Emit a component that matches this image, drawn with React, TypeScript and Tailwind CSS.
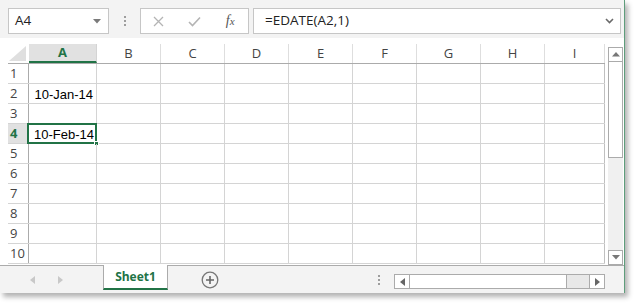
import React from "react";

const cols = [
  { l: "A", w: "w-[68px]" },
  { l: "B", w: "w-[64px]" },
  { l: "C", w: "w-[64px]" },
  { l: "D", w: "w-[64px]" },
  { l: "E", w: "w-[64px]" },
  { l: "F", w: "w-[64px]" },
  { l: "G", w: "w-[64px]" },
  { l: "H", w: "w-[64px]" },
  { l: "I", w: "w-[60px]" },
];

const rows = [1, 2, 3, 4, 5, 6, 7, 8, 9, 10];

function Dots() {
  return (
    <div className="flex flex-col gap-[2px]">
      <div className="w-[2px] h-[2px] bg-[#9d9d9d]" />
      <div className="w-[2px] h-[2px] bg-[#9d9d9d]" />
      <div className="w-[2px] h-[2px] bg-[#9d9d9d]" />
    </div>
  );
}

export default function App() {
  return (
    <div className="w-[636px] h-[303px] bg-white overflow-hidden" style={{ fontFamily: '"Open Sans", "Noto Sans", sans-serif' }}>
      <div className="w-[625px] h-[293px] bg-[#f3f3f3] border-r border-[#5e9d7b] shadow-[3px_4px_5px_rgba(0,0,0,0.3)] flex flex-col">
        {/* toolbar */}
        <div className="h-[38px] flex items-start pt-[8px] pl-[8px] shrink-0">
          <div className="w-[101px] h-[26px] bg-white border border-[#c6c6c6] flex items-center justify-between pl-[6px] pr-[7px]">
            <span className="text-[13.5px] text-[#222] leading-none">A4</span>
            <svg width="8" height="5" viewBox="0 0 8 5"><polygon points="0,0 8,0 4,4.5" fill="#7a7a7a" /></svg>
          </div>
          <div className="w-[31px] h-[26px] flex items-center justify-center">
            <Dots />
          </div>
          <div className="w-[109px] h-[26px] bg-white border border-[#c6c6c6] flex items-center">
            <div className="w-[36px] flex justify-center">
              <svg width="11" height="11" viewBox="0 0 11 11"><path d="M1 1 L10 10 M10 1 L1 10" stroke="#b4b4b4" strokeWidth="1.3" /></svg>
            </div>
            <div className="w-[36px] flex justify-center">
              <svg width="13" height="11" viewBox="0 0 13 11"><path d="M1 6 L4.5 9.5 L12 1.5" stroke="#b4b4b4" strokeWidth="1.6" fill="none" /></svg>
            </div>
            <div className="w-[36px] flex justify-center">
              <span className="italic text-[#555] text-[14px] leading-none" style={{ fontFamily: '"Liberation Serif", serif' }}>
                f<span className="text-[11px]">x</span>
              </span>
            </div>
          </div>
          <div className="ml-[4px] w-[368px] h-[26px] bg-white border border-[#c6c6c6] flex items-center justify-between pl-[11px] pr-[6px]">
            <span className="text-[13.5px] text-[#222] leading-none">=EDATE(A2,1)</span>
            <svg width="9" height="6" viewBox="0 0 9 6"><path d="M1 1 L4.5 4.5 L8 1" stroke="#6a6a6a" strokeWidth="1.6" fill="none" /></svg>
          </div>
        </div>

        {/* sheet area */}
        <div className="h-[227px] bg-white flex pl-[8px] shrink-0">
          <div className="w-[597px] flex flex-col pt-[6px]">
            <div className="h-[20px] flex border-b border-[#ababab]">
              <div className="w-[21px] h-full flex items-end justify-end pr-[3px] pb-[2px]">
                <svg width="17" height="15" viewBox="0 0 17 15"><polygon points="17,0 17,15 0,15" fill="#dfdfdf" /></svg>
              </div>
              {cols.map((c, i) =>
                i === 0 ? (
                  <div key={c.l} className={`${c.w} h-full bg-[#e1e1e1] border-r border-[#d4d4d4] border-b-2 border-b-[#217346] flex items-center justify-center text-[13px] font-bold text-[#217346]`}>
                    {c.l}
                  </div>
                ) : (
                  <div key={c.l} className={`${c.w} h-full border-r border-[#dedede] flex items-center justify-center text-[13px] text-[#444]`}>
                    {c.l}
                  </div>
                )
              )}
            </div>
            {rows.map((r) => (
              <div key={r} className="h-[20px] flex border-b border-[#d4d4d4]">
                {r === 4 ? (
                  <div className="w-[21px] h-full bg-[#e1e1e1] border-r border-[#217346] flex items-center pl-[2px] text-[13px] font-bold text-[#217346]">
                    {r}
                  </div>
                ) : (
                  <div className="w-[21px] h-full border-r border-[#ababab] flex items-center pl-[2px] text-[13px] text-[#444]">
                    {r}
                  </div>
                )}
                {cols.map((c, i) => (
                  <div key={c.l} className={`${c.w} h-full border-r ${i === 8 ? "border-[#c0c0c0]" : "border-[#d4d4d4]"} relative`}>
                    {i === 0 && r === 2 && (
                      <div className="absolute inset-0 flex items-center justify-end pr-[3px] pt-[2px] text-[13px] text-black" style={{ fontFamily: '"Liberation Sans", Arial, sans-serif' }}>
                        10-Jan-14
                      </div>
                    )}
                    {i === 0 && r === 4 && (
                      <>
                        <div className="absolute left-[-2px] top-[-1px] right-[-1px] bottom-[-1px] border-2 border-[#217346] flex items-center justify-end pr-[1px] pt-[2px] text-[13px] text-black" style={{ fontFamily: '"Liberation Sans", Arial, sans-serif' }}>
                          10-Feb-14
                        </div>
                        <div className="absolute right-[-3px] bottom-[-3px] w-[5px] h-[5px] bg-[#217346] border border-white" />
                      </>
                    )}
                  </div>
                ))}
              </div>
            ))}
          </div>
          {/* vertical scrollbar */}
          <div className="ml-[3px] w-[15px] flex flex-col pt-[9px]">
            <div className="h-[15px] border border-[#ababab] bg-white flex items-center justify-center">
              <svg width="8" height="5" viewBox="0 0 8 5"><polygon points="0,4.5 8,4.5 4,0" fill="#777" /></svg>
            </div>
            <div className="h-[96px] border border-t-0 border-[#ababab] bg-white" />
            <div className="flex-1 bg-[#f0f0f0]" />
            <div className="h-[15px] border border-[#ababab] bg-white flex items-center justify-center">
              <svg width="8" height="5" viewBox="0 0 8 5"><polygon points="0,0 8,0 4,4.5" fill="#777" /></svg>
            </div>
          </div>
        </div>

        {/* bottom bar */}
        <div className="h-[28px] border-t border-[#ababab] flex items-start shrink-0">
          <div className="w-[103px] h-[27px] flex items-center">
            <div className="ml-[30px]">
              <svg width="5" height="8" viewBox="0 0 5 8"><polygon points="5,0 5,8 0,4" fill="#c8c8c8" /></svg>
            </div>
            <div className="ml-[23px]">
              <svg width="5" height="8" viewBox="0 0 5 8"><polygon points="0,0 0,8 5,4" fill="#c8c8c8" /></svg>
            </div>
          </div>
          <div className="-mt-px w-[65px] h-[25px] bg-white border-l border-r border-[#ababab] border-b-2 border-b-[#217346] flex items-center justify-center text-[12px] font-bold text-[#217346]">
            Sheet1
          </div>
          <div className="ml-[33px] h-[27px] flex items-center">
            <svg width="18" height="18" viewBox="0 0 18 18">
              <circle cx="9" cy="9" r="7.8" stroke="#777" strokeWidth="1.3" fill="none" />
              <path d="M5 9 H13 M9 5 V13" stroke="#666" strokeWidth="1.6" />
            </svg>
          </div>
          <div className="ml-[159px] h-[27px] flex items-center">
            <Dots />
          </div>
          <div className="ml-[14px] mt-[8px] w-[211px] h-[15px] flex border border-[#ababab] bg-[#e8e8e8]">
            <div className="w-[15px] h-full bg-white border-r border-[#ababab] flex items-center justify-center">
              <svg width="5" height="8" viewBox="0 0 5 8"><polygon points="5,0 5,8 0,4" fill="#666" /></svg>
            </div>
            <div className="w-[157px] h-full bg-white border-r border-[#ababab]" />
            <div className="flex-1" />
            <div className="w-[15px] h-full bg-white border-l border-[#ababab] flex items-center justify-center">
              <svg width="5" height="8" viewBox="0 0 5 8"><polygon points="0,0 0,8 5,4" fill="#666" /></svg>
            </div>
          </div>
        </div>
      </div>
    </div>
  );
}
